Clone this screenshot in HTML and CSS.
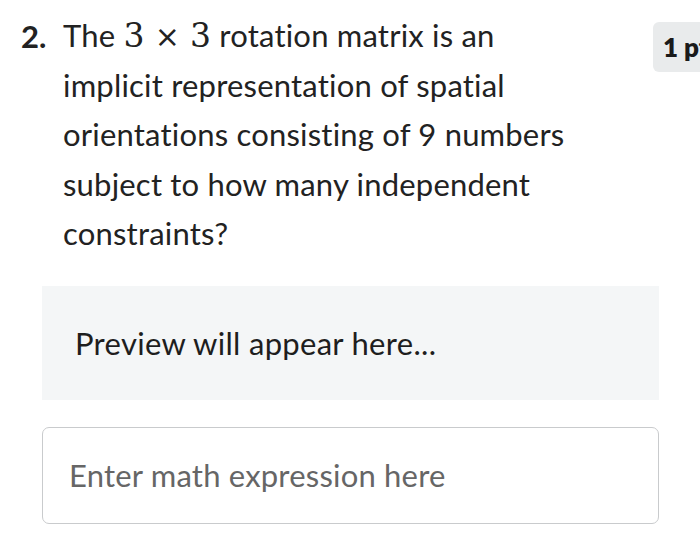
FILE: index.html
```html
<!DOCTYPE html>
<html>
<head>
<meta charset="utf-8">
<link rel="stylesheet" href="styles.css">
</head>
<body>
<div class="question">
  <div class="num">2.</div>
  <div class="body">
    <p class="stem">The <span class="expr"><span class="math">3</span><span class="times">×</span><span class="math">3</span></span> rotation matrix is an implicit representation of spatial orientations consisting of 9 numbers subject to how many independent constraints?</p>
    <div class="preview">Preview will appear here...</div>
    <div class="input">Enter math expression here</div>
  </div>
  <div class="points">1 pt</div>
</div>
</body>
</html>
```
FILE: styles.css
```css
html, body {
  margin: 0;
  padding: 0;
  background: #ffffff;
  overflow: hidden;
}
body {
  width: 700px;
  height: 558px;
  font-family: "Lato", "Open Sans", sans-serif;
  color: #222222;
}
.question {
  display: flex;
  padding-top: 11px;
  position: relative;
}
.num {
  width: 63px;
  box-sizing: border-box;
  padding-left: 21px;
  font-weight: 700;
  font-size: 31px;
  line-height: 50px;
  flex-shrink: 0;
}
.body {
  width: 530px;
  flex-shrink: 0;
}
.stem {
  margin: 0;
  font-size: 31px;
  line-height: 49.5px;
  letter-spacing: 0.2px;
  width: 530px;
}
.expr {
  display: inline-flex;
  align-items: baseline;
  gap: 10px;
  line-height: 40px;
}
.math {
  font-family: "DejaVu Serif", "Liberation Serif", serif;
  font-size: 33px;
}
.times {
  font-family: "DejaVu Sans", sans-serif;
  font-size: 30px;
}
.preview {
  margin-left: -21px;
  margin-top: 27px;
  width: 617px;
  height: 114px;
  box-sizing: border-box;
  background: #f4f6f7;
  padding-left: 33px;
  display: flex;
  align-items: center;
  font-size: 31px;
  letter-spacing: 0.3px;
  color: #1e1e1e;
}
.input {
  margin-left: -21px;
  margin-top: 27px;
  width: 617px;
  height: 97px;
  box-sizing: border-box;
  border: 1.5px solid #c9cbcd;
  border-radius: 7px;
  padding-left: 26px;
  display: flex;
  align-items: center;
  font-size: 31px;
  letter-spacing: 0.2px;
  color: #666666;
}
.points {
  position: absolute;
  left: 653px;
  top: 22px;
  height: 50px;
  padding: 0 10px;
  border-radius: 6px;
  background: #e9ebec;
  font-weight: 800;
  font-size: 26px;
  line-height: 50px;
  color: #1a1a1a;
  white-space: nowrap;
}
```
